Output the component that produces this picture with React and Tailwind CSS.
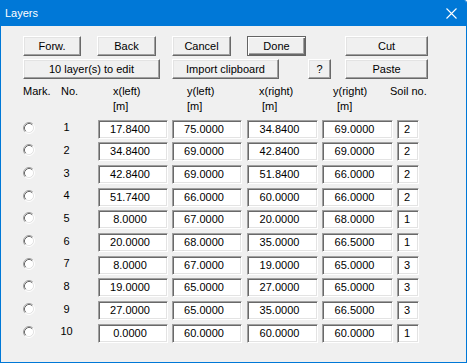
import React from 'react';

const rows = [
    ['1', '17.8400', '75.0000', '34.8400', '69.0000', '2'],
    ['2', '34.8400', '69.0000', '42.8400', '69.0000', '2'],
    ['3', '42.8400', '69.0000', '51.8400', '66.0000', '2'],
    ['4', '51.7400', '66.0000', '60.0000', '66.0000', '2'],
    ['5', '8.0000', '67.0000', '20.0000', '68.0000', '1'],
    ['6', '20.0000', '68.0000', '35.0000', '66.5000', '1'],
    ['7', '8.0000', '67.0000', '19.0000', '65.0000', '3'],
    ['8', '19.0000', '65.0000', '27.0000', '65.0000', '3'],
    ['9', '27.0000', '65.0000', '35.0000', '66.5000', '3'],
    ['10', '0.0000', '60.0000', '60.0000', '60.0000', '1'],
];

const btn =
    'h-[20px] flex items-center justify-center bg-[#f0f0f0] border border-t-white border-l-white border-r-[#696969] border-b-[#696969] shadow-[inset_-1px_-1px_0_#a0a0a0,inset_1px_1px_0_#e3e3e3]';

const field =
    'h-[19px] bg-white border border-t-[#a0a0a0] border-l-[#a0a0a0] border-r-white border-b-white shadow-[inset_1px_1px_0_#696969,inset_-1px_-1px_0_#e3e3e3] flex items-center';

const Radio = () => (
    <svg width="12" height="12" viewBox="0 0 12 12">
        <circle cx="6" cy="6" r="4.5" fill="white" />
        <path d="M2.11 9.89 A5.5 5.5 0 0 1 9.89 2.11" fill="none" stroke="#a0a0a0" />
        <path d="M2.82 9.18 A4.5 4.5 0 0 1 9.18 2.82" fill="none" stroke="#696969" />
        <path d="M9.89 2.11 A5.5 5.5 0 0 1 2.11 9.89" fill="none" stroke="#ffffff" />
        <path d="M9.18 2.82 A4.5 4.5 0 0 1 2.82 9.18" fill="none" stroke="#e3e3e3" />
    </svg>
);

const Cell = ({ value, width }) => (
    <div className={`${field} ${width} justify-center pr-[6px]`}>{value}</div>
);

export default function App() {
    return (
        <div
            className="w-[467px] h-[363px] flex flex-col bg-[#f0f0f0] text-black text-[11px] leading-[13px] border border-t-0 border-[#0078d7] rounded-tr-[3px] overflow-hidden"
            style={{ fontFamily: '"Liberation Sans", Arial, sans-serif' }}
        >
            {/* title bar */}
            <div className="h-[26px] shrink-0 bg-[#0078d7] -mx-px flex items-center justify-between pl-[5px] pr-[10px]">
                <span className="text-white text-[11px]">Layers</span>
                <svg width="11" height="11" viewBox="0 0 11 11">
                    <path d="M0.5 0.5 L10.5 10.5 M10.5 0.5 L0.5 10.5" stroke="white" strokeWidth="1.1" />
                </svg>
            </div>

            <div className="pl-[22px] pt-[10px]">
                {/* buttons */}
                <div className="flex">
                    <div className={`${btn} w-[58px]`}>Forw.</div>
                    <div className={`${btn} w-[59px] ml-[16px]`}>Back</div>
                    <div className={`${btn} w-[59px] ml-[16px]`}>Cancel</div>
                    <div className="h-[20px] w-[59px] ml-[16px] flex items-center justify-center bg-[#f0f0f0] border border-[#646464] shadow-[inset_1px_1px_0_white,inset_-1px_-1px_0_#696969,inset_-2px_-2px_0_#a0a0a0]">
                        Done
                    </div>
                    <div className={`${btn} w-[83px] ml-[39px]`}>Cut</div>
                </div>
                <div className="flex mt-[3px]">
                    <div className={`${btn} w-[137px]`}>10 layer(s) to edit</div>
                    <div className={`${btn} w-[107px] ml-[12px]`}>Import clipboard</div>
                    <div className={`${btn} w-[23px] ml-[29px]`}>?</div>
                    <div className={`${btn} w-[83px] ml-[14px]`}>Paste</div>
                </div>

                {/* header */}
                <div className="flex mt-[5px] leading-[15px]">
                    <div className="w-[38px]">Mark.</div>
                    <div className="w-[37px]">No.</div>
                    <div className="w-[74px] pl-[15px]">
                        <div>x(left)</div>
                        <div>[m]</div>
                    </div>
                    <div className="w-[75px] pl-[15px]">
                        <div>y(left)</div>
                        <div>[m]</div>
                    </div>
                    <div className="w-[75px]">
                        <div className="pl-[12px]">x(right)</div>
                        <div className="pl-[15px]">[m]</div>
                    </div>
                    <div className="w-[68px]">
                        <div className="pl-[11px]">y(right)</div>
                        <div className="pl-[15px]">[m]</div>
                    </div>
                    <div className="whitespace-nowrap">Soil no.</div>
                </div>

                {/* rows */}
                <div className="mt-[4px]">
                    {rows.map((r) => (
                        <div key={r[0]} className="flex items-center h-[22.67px]">
                            <div className="w-[12px] mb-[3px] flex">
                                <Radio />
                            </div>
                            <div className="w-[63px] text-center mb-[3px]">{r[0]}</div>
                            <div className="w-[74px]">
                                <Cell value={r[1]} width="w-[70px]" />
                            </div>
                            <div className="w-[75px]">
                                <Cell value={r[2]} width="w-[70px]" />
                            </div>
                            <div className="w-[75px]">
                                <Cell value={r[3]} width="w-[71px]" />
                            </div>
                            <div className="w-[75px]">
                                <Cell value={r[4]} width="w-[71px]" />
                            </div>
                            <div className={`${field} w-[22px] pl-[6px]`}>{r[5]}</div>
                        </div>
                    ))}
                </div>
            </div>
        </div>
    );
}
